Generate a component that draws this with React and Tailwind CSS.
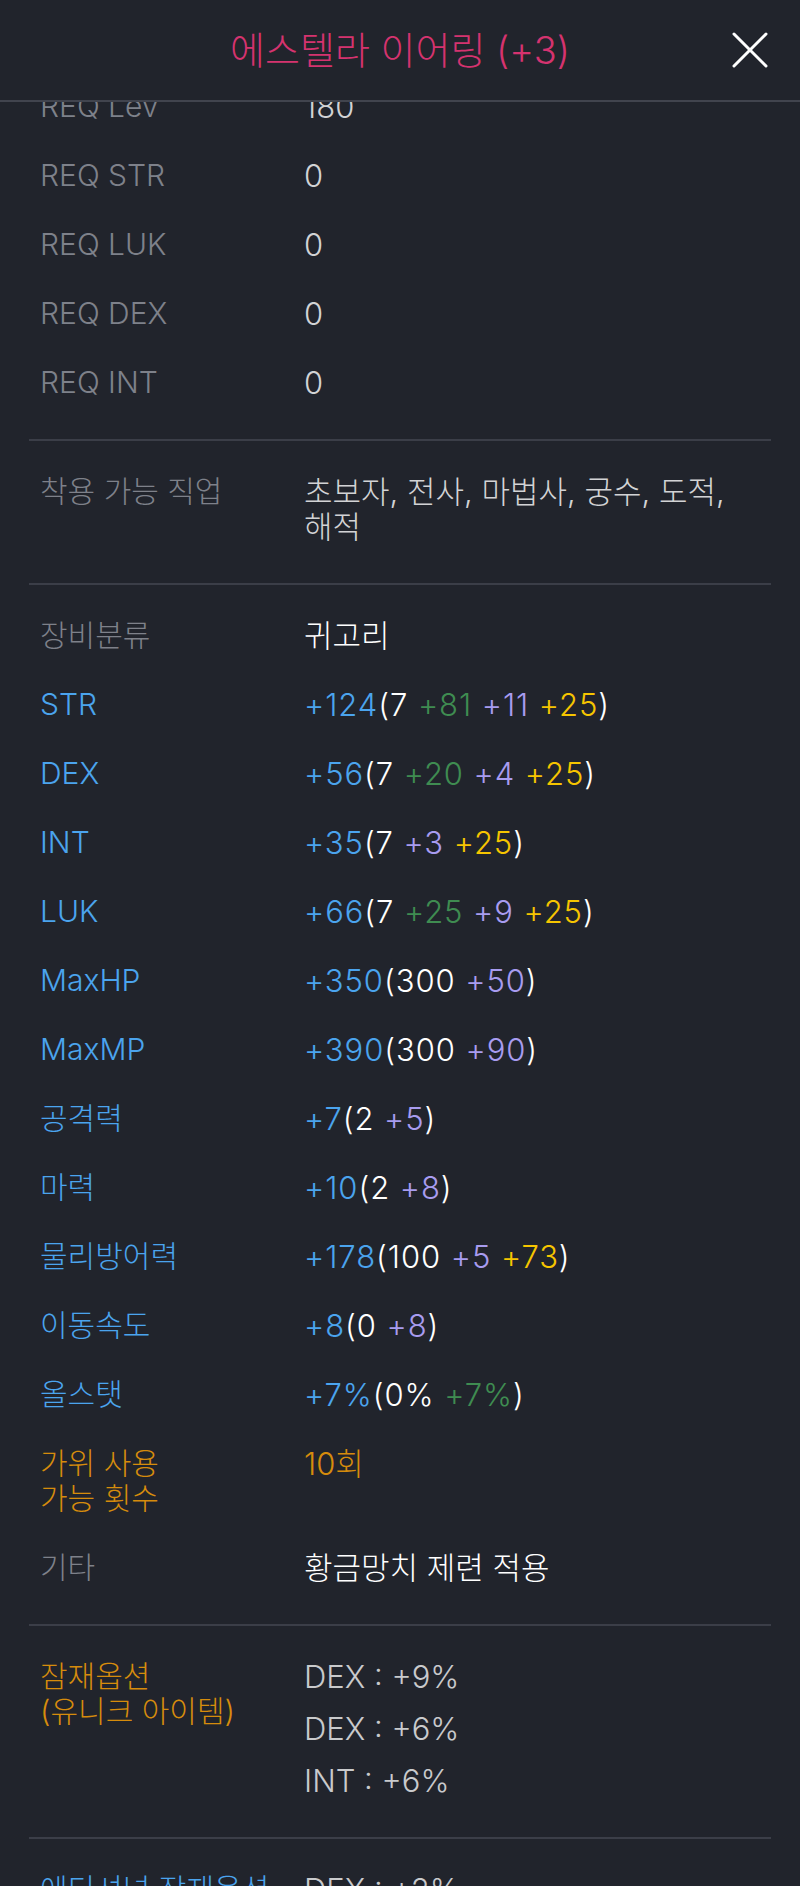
import React from "react";

const C = {
  b: "text-[#4ba4ee]",
  w: "text-white",
  g: "text-[#3f8c51]",
  p: "text-[#a89cf0]",
  y: "text-[#f6c500]",
};

const stats = [
  ["STR", [["+124", "b"], ["(7 ", "w"], ["+81", "g"], [" "], ["+11", "p"], [" "], ["+25", "y"], [")", "w"]]],
  ["DEX", [["+56", "b"], ["(7 ", "w"], ["+20", "g"], [" "], ["+4", "p"], [" "], ["+25", "y"], [")", "w"]]],
  ["INT", [["+35", "b"], ["(7 ", "w"], ["+3", "p"], [" "], ["+25", "y"], [")", "w"]]],
  ["LUK", [["+66", "b"], ["(7 ", "w"], ["+25", "g"], [" "], ["+9", "p"], [" "], ["+25", "y"], [")", "w"]]],
  ["MaxHP", [["+350", "b"], ["(300 ", "w"], ["+50", "p"], [")", "w"]]],
  ["MaxMP", [["+390", "b"], ["(300 ", "w"], ["+90", "p"], [")", "w"]]],
  ["공격력", [["+7", "b"], ["(2 ", "w"], ["+5", "p"], [")", "w"]]],
  ["마력", [["+10", "b"], ["(2 ", "w"], ["+8", "p"], [")", "w"]]],
  ["물리방어력", [["+178", "b"], ["(100 ", "w"], ["+5", "p"], [" "], ["+73", "y"], [")", "w"]]],
  ["이동속도", [["+8", "b"], ["(0 ", "w"], ["+8", "p"], [")", "w"]]],
  ["올스탯", [["+7%", "b"], ["(0% ", "w"], ["+7%", "g"], [")", "w"]]],
];

const reqs = [
  ["REQ Lev", "180"],
  ["REQ STR", "0"],
  ["REQ LUK", "0"],
  ["REQ DEX", "0"],
  ["REQ INT", "0"],
];

const Row = ({ label, labelClass = "text-[#7e818a]", children }) => (
  <div className="grid grid-cols-[264px_1fr] px-[11px] py-[17px]">
    <div className={labelClass}>{label}</div>
    <div className="text-[31px]">{children}</div>
  </div>
);

const Divider = () => <div className="h-[2px] bg-[#3b3e48]" />;

export default function App() {
  return (
    <div className="h-[1886px] overflow-hidden bg-[#21242c] font-[Inter,'Noto_Sans_CJK_KR',sans-serif] font-light text-[30px] leading-[35px]">
      {/* Header */}
      <div className="relative z-10 h-[102px] bg-[#21242c] border-b-2 border-[#41444e] flex items-center justify-center">
        <h1 className="text-[38px] leading-[44px] text-[#d5336f] font-light">에스텔라 이어링 (+3)</h1>
        <button className="absolute right-[32px] top-[32px] w-[36px] h-[36px] flex items-center justify-center">
          <svg width="36" height="36" viewBox="0 0 36 36" fill="none" stroke="white" strokeWidth="3" strokeLinecap="round">
            <line x1="2" y1="2" x2="34" y2="34" />
            <line x1="34" y1="2" x2="2" y2="34" />
          </svg>
        </button>
      </div>

      <div className="-mt-[30px] px-[29px]">
        {/* Requirements */}
        <div className="pb-[22px]">
          {reqs.map(([l, v]) => (
            <Row key={l} label={l}>
              <span className="text-[#d2d3d5]">{v}</span>
            </Row>
          ))}
        </div>
        <Divider />

        {/* Jobs */}
        <div className="pt-[16px] pb-[22px]">
          <Row label="착용 가능 직업">
            <span className="text-[#d2d3d5]">
              초보자, 전사, 마법사, 궁수, 도적,
              <br />
              해적
            </span>
          </Row>
        </div>
        <Divider />

        {/* Stats */}
        <div className="pt-[16px] pb-[22px]">
          <Row label="장비분류">
            <span className="text-white">귀고리</span>
          </Row>
          {stats.map(([l, segs]) => (
            <Row key={l} label={l} labelClass="text-[#4ba4ee]">
              <span className="whitespace-pre tracking-[0.03em]">
                {segs.map(([t, c], i) => (
                  <span key={i} className={c ? C[c] : ""}>
                    {t}
                  </span>
                ))}
              </span>
            </Row>
          ))}
          <Row
            label={
              <>
                가위 사용
                <br />
                가능 횟수
              </>
            }
            labelClass="text-[#d68c0c]"
          >
            <span className="text-[#d68c0c]">10회</span>
          </Row>
          <Row label="기타">
            <span className="text-white">황금망치 제련 적용</span>
          </Row>
        </div>
        <Divider />

        {/* Potential */}
        <div className="pt-[16px] pb-[22px]">
          <Row
            label={
              <>
                잠재옵션
                <br />
                (유니크 아이템)
              </>
            }
            labelClass="text-[#d68c0c]"
          >
            <div className="flex flex-col gap-[17px] text-[#c9cacc]">
              <span>DEX : +9%</span>
              <span>DEX : +6%</span>
              <span>INT : +6%</span>
            </div>
          </Row>
        </div>
        <Divider />

        {/* Additional potential */}
        <div className="pt-[16px] pb-[22px]">
          <Row label="에디셔널 잠재옵션" labelClass="text-[#4ba4ee]">
            <div className="flex flex-col gap-[17px] text-[#c9cacc]">
              <span>DEX : +2%</span>
              <span>LUK : +3%</span>
            </div>
          </Row>
        </div>
      </div>
    </div>
  );
}
